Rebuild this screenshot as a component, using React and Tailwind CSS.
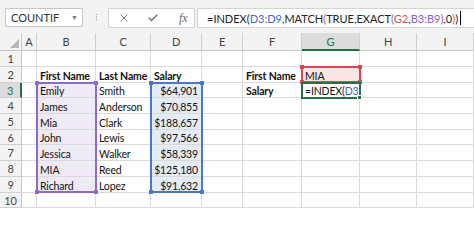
import React from 'react';
import { X, Check } from 'lucide-react';

const cols = ['A', 'B', 'C', 'D', 'E', 'F', 'G', 'H', 'I'];

const rows = [
  { n: 1, h: 'h-[16px]', cells: {} },
  { n: 2, h: 'h-[16px]', cells: { B: 'First Name', C: 'Last Name', D: 'Salary', F: 'First Name', G: 'MIA' }, bold: ['B', 'C', 'D', 'F'] },
  { n: 3, h: 'h-[15px]', cells: { B: 'Emily', C: 'Smith', D: '$64,901', F: 'Salary' }, bold: ['F'] },
  { n: 4, h: 'h-[16px]', cells: { B: 'James', C: 'Anderson', D: '$70,855' } },
  { n: 5, h: 'h-[16px]', cells: { B: 'Mia', C: 'Clark', D: '$188,657' } },
  { n: 6, h: 'h-[15px]', cells: { B: 'John', C: 'Lewis', D: '$97,566' } },
  { n: 7, h: 'h-[16px]', cells: { B: 'Jessica', C: 'Walker', D: '$58,339' } },
  { n: 8, h: 'h-[16px]', cells: { B: 'MIA', C: 'Reed', D: '$125,180' } },
  { n: 9, h: 'h-[16px]', cells: { B: 'Richard', C: 'Lopez', D: '$91,632' } },
  { n: 10, h: 'h-[15px]', cells: {} },
];

const Corner = ({ className }) => (
  <span className={`absolute w-[4px] h-[4px] ${className}`} />
);

const Cell = ({ row, col }) => {
  const value = row.cells[col];
  const bold = row.bold && row.bold.includes(col);
  let bg = '';
  if (col === 'B' && row.n >= 3 && row.n <= 9) bg = 'bg-[#efebf6]';
  if (col === 'D' && row.n >= 3 && row.n <= 9) bg = 'bg-[#e5ecf6]';
  if (col === 'G' && row.n === 2) bg = 'bg-[#fbe4e4]';
  const right = col === 'D' && row.n >= 3;

  let content = value;
  if (col === 'G' && row.n === 3) {
    content = (
      <>
        =INDEX(<span className="text-[#3b6cc0]">D3:</span>
      </>
    );
  }

  return (
    <div
      className={`border-r border-b border-[#dadada] px-[3px] pb-[1px] flex items-end overflow-hidden whitespace-nowrap text-[#111] ${bg} ${right ? 'justify-end' : ''} ${bold ? 'font-bold' : ''}`}
    >
      {content}
    </div>
  );
};

export default function App() {
  return (
    <div className="w-[474px] h-[209px] overflow-hidden bg-white font-['Lato',sans-serif] text-[10.5px] tracking-[-0.15px] leading-none">
      {/* Toolbar */}
      <div className="h-[33px] bg-[#f3f3f3] flex items-start pt-[8px] pl-[5px] tracking-normal">
        <div className="w-[78px] h-[19px] bg-white border border-[#c6c6c6] flex items-center justify-between pl-[5px] pr-[4px] text-[11px] text-[#333]">
          <span>COUNTIF</span>
          <span className="text-[7px] text-[#777]">▼</span>
        </div>
        <div className="ml-[13px] mt-[6px] flex flex-col gap-[1px]">
          <span className="w-[1px] h-[1px] bg-[#aaa]" />
          <span className="w-[1px] h-[1px] bg-[#aaa]" />
          <span className="w-[1px] h-[1px] bg-[#aaa]" />
          <span className="w-[1px] h-[1px] bg-[#aaa]" />
        </div>
        <div className="ml-[11px] w-[87px] h-[20px] bg-white border border-[#d4d4d4] flex items-center text-[#555]">
          <X size={12} strokeWidth={1.6} className="ml-[9px]" />
          <Check size={12} strokeWidth={2.4} className="ml-[17px] text-[#666]" />
          <span className="ml-[20px] font-['Liberation_Serif',serif] italic text-[12px] text-[#666]">fx</span>
        </div>
        <div className="ml-[2px] flex-1 h-[20px] bg-white border border-[#d4d4d4] border-r-0 flex items-center pl-[9px] text-[11px] text-[#222]">
          <span>
            =INDEX(<span className="text-[#3b6cc0]">D3:D9</span>,MATCH<span className="text-[#d0574f]">(</span>TRUE,EXACT<span className="text-[#8a5fc0]">(</span><span className="text-[#d0574f]">G2</span>,<span className="text-[#8a5fc0]">B3:B9</span><span className="text-[#8a5fc0]">)</span>,0<span className="text-[#d0574f]">)</span>)
          </span>
          <span className="ml-[2px] w-[1px] h-[14px] bg-black" />
        </div>
      </div>

      {/* Sheet */}
      <div className="relative grid grid-cols-[22px_15px_59px_55px_51px_41px_59px_58px_57px_1fr]">
        {/* Header row */}
        <div className="h-[18px] bg-[#f3f3f3] border-r border-b border-[#c8c8c8] flex items-end justify-end p-[2px]">
          <span className="w-0 h-0 border-l-[9px] border-l-transparent border-b-[9px] border-b-[#b8b8b8]" />
        </div>
        {cols.map((c) => (
          <div
            key={c}
            className={`h-[18px] flex items-center justify-center text-[11px] text-[#444] border-r border-[#d0d0d0] ${c === 'G' ? 'bg-[#dcdcdc] border-b-2 border-b-[#217346] text-[#217346]' : 'bg-[#f3f3f3] border-b border-b-[#c8c8c8]'}`}
          >
            {c}
          </div>
        ))}

        {rows.map((row) => (
          <React.Fragment key={row.n}>
            <div
              className={`${row.h} flex items-center justify-center text-[11px] text-[#444] border-b border-[#d0d0d0] ${row.n === 3 ? 'bg-[#dcdcdc] border-r-2 border-r-[#217346] text-[#217346]' : 'bg-[#f3f3f3] border-r border-r-[#c8c8c8]'}`}
            >
              {row.n}
            </div>
            {cols.map((c) => (
              <Cell key={c} row={row} col={c} />
            ))}
          </React.Fragment>
        ))}

        {/* B3:B9 range */}
        <div className="absolute left-[36px] top-[49px] w-[61px] h-[111px] border-2 border-[#8a6cc8] pointer-events-none">
          <Corner className="-left-[3px] -top-[3px] bg-[#8a6cc8]" />
          <Corner className="-right-[3px] -top-[3px] bg-[#8a6cc8]" />
          <Corner className="-left-[3px] -bottom-[3px] bg-[#8a6cc8]" />
          <Corner className="-right-[3px] -bottom-[3px] bg-[#8a6cc8]" />
        </div>
        {/* D3:D9 range */}
        <div className="absolute left-[150px] top-[49px] w-[53px] h-[111px] border-2 border-[#4a78c6] pointer-events-none">
          <Corner className="-left-[3px] -top-[3px] bg-[#4a78c6]" />
          <Corner className="-right-[3px] -top-[3px] bg-[#4a78c6]" />
          <Corner className="-left-[3px] -bottom-[3px] bg-[#4a78c6]" />
          <Corner className="-right-[3px] -bottom-[3px] bg-[#4a78c6]" />
        </div>
        {/* G2 reference */}
        <div className="absolute left-[301px] top-[33px] w-[60px] h-[17px] border-2 border-[#cf4b55] pointer-events-none">
          <Corner className="-left-[3px] -top-[3px] bg-[#cf4b55]" />
          <Corner className="-right-[3px] -top-[3px] bg-[#cf4b55]" />
          <Corner className="-left-[3px] -bottom-[3px] bg-[#cf4b55]" />
          <Corner className="-right-[3px] -bottom-[3px] bg-[#cf4b55]" />
        </div>
        {/* G3 active cell */}
        <div className="absolute left-[301px] top-[49px] w-[60px] h-[17px] border-2 border-[#217346] pointer-events-none">
          <span className="absolute -right-[3px] -bottom-[3px] w-[5px] h-[5px] bg-[#217346] border border-white" />
        </div>
      </div>
    </div>
  );
}
